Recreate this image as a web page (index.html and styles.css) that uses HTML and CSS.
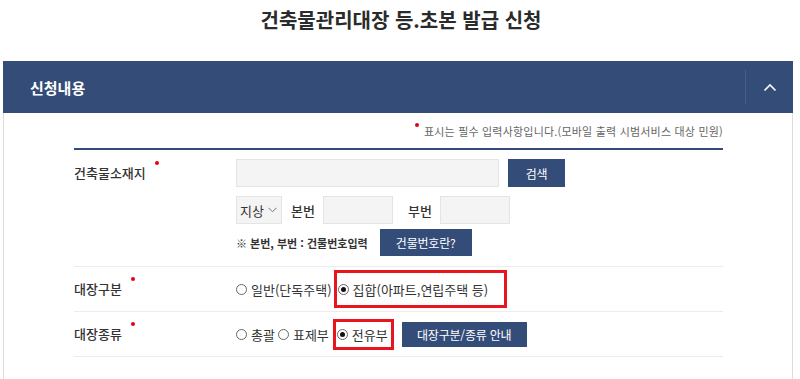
FILE: index.html
```html
<!DOCTYPE html>
<html lang="ko">
<head>
<meta charset="utf-8">
<title>건축물관리대장 등.초본 발급 신청</title>
<link rel="stylesheet" href="styles.css">
</head>
<body>
<h1 class="title">건축물관리대장 등.초본 발급 신청</h1>
<section class="panel">
  <div class="panel-head">
    <h2 class="panel-title">신청내용</h2>
    <button class="toggle" type="button" aria-label="접기">
      <svg width="14" height="9" viewBox="0 0 14 9"><polyline points="1.5,7.5 7,2 12.5,7.5" fill="none" stroke="#fff" stroke-width="1.6"/></svg>
    </button>
  </div>
  <div class="panel-body">
    <p class="note"><span class="req"></span>표시는 필수 입력사항입니다.(모바일 출력 시범서비스 대상 민원)</p>
    <div class="form">
      <div class="row row-addr">
        <div class="label">건축물소재지<span class="req"></span></div>
        <div class="field">
          <div class="line">
            <span class="input input-addr"></span>
            <button class="btn btn-search" type="button">검색</button>
          </div>
          <div class="line">
            <span class="select">지상<svg width="9" height="6" viewBox="0 0 9 6"><polyline points="0.5,0.8 4.5,4.8 8.5,0.8" fill="none" stroke="#777" stroke-width="1"/></svg></span>
            <span class="sub-label sl-1">본번</span>
            <span class="input input-num"></span>
            <span class="sub-label sl-2">부번</span>
            <span class="input input-num"></span>
          </div>
          <div class="line line-hint">
            <span class="hint">※ 본번, 부번 : 건물번호입력</span>
            <button class="btn btn-help" type="button">건물번호란?</button>
          </div>
        </div>
      </div>
      <div class="row row-radio">
        <div class="label">대장구분<span class="req"></span></div>
        <div class="field radios">
          <span class="radio"><span class="dot"></span>일반(단독주택)</span>
          <span class="mark mark-1"><span class="radio"><span class="dot on"></span>집합(아파트,연립주택 등)</span></span>
        </div>
      </div>
      <div class="row row-radio">
        <div class="label">대장종류<span class="req"></span></div>
        <div class="field radios">
          <span class="radio"><span class="dot"></span>총괄</span>
          <span class="radio radio-gap"><span class="dot"></span>표제부</span>
          <span class="mark mark-2"><span class="radio"><span class="dot on"></span>전유부</span></span>
          <button class="btn btn-guide" type="button">대장구분/종류 안내</button>
        </div>
      </div>
    </div>
  </div>
</section>
</body>
</html>
```

FILE: styles.css
```css
* { box-sizing: border-box; }
html, body { margin: 0; padding: 0; background: #fff; }
body {
  font-family: "Noto Sans CJK KR", "Noto Sans", sans-serif;
  color: #333;
  width: 800px;
  overflow: hidden;
}
.title {
  margin: 0;
  height: 40px;
  line-height: 40px;
  text-align: center;
  font-size: 20px;
  font-weight: 700;
  letter-spacing: 0;
  color: #2b2b2b;
  padding-left: 2px;
}
.panel {
  margin: 21px 0 0 3px;
  width: 790px;
}
.panel-head {
  height: 52px;
  background: #344c78;
  display: flex;
  align-items: center;
  justify-content: space-between;
}
.panel-title {
  margin: 0 0 0 27px;
  color: #fff;
  font-size: 15px;
  font-weight: 700;
  letter-spacing: 0;
}
.toggle {
  width: 48px;
  height: 34px;
  border: 0;
  border-left: 1px solid #46608e;
  background: transparent;
  padding: 0;
  display: flex;
  align-items: center;
  justify-content: center;
}
.panel-body {
  border-left: 1px solid #dcdcdc;
  border-right: 1px solid #dcdcdc;
  padding: 9px 69px 30px 70px;
}
.note {
  margin: 0;
  height: 18px;
  line-height: 18px;
  text-align: right;
  font-size: 11px;
  letter-spacing: 0.2px;
  color: #666;
}
.note .req { vertical-align: top; margin: 1px 5px 0 0; }
.req {
  display: inline-block;
  width: 4px;
  height: 4px;
  border-radius: 50%;
  background: #e60012;
}
.form {
  margin-top: 8px;
  border-top: 2px solid #344c78;
}
.row {
  display: flex;
  border-bottom: 1px solid #ececec;
}
.label {
  width: 162px;
  flex: none;
  font-size: 13px;
  font-weight: 500;
  letter-spacing: 0;
  line-height: 28px;
  color: #333;
}
.label .req { vertical-align: top; margin: 2px 0 0 9px; }
.row-addr { padding: 9px 0 10px; }
.field { flex: 1; }
.line { display: flex; align-items: center; }
.line + .line { margin-top: 9px; }
.line-hint { margin-top: 5px !important; }
.input {
  display: block;
  height: 28px;
  background: #f4f4f4;
  border: 1px solid #e4e4e4;
}
.input-addr { width: 263px; }
.input-num { width: 70px; }
.btn {
  border: 0;
  background: #344c78;
  color: #fff;
  font-family: inherit;
  font-size: 12px;
  letter-spacing: -0.2px;
  padding: 0;
  border-radius: 0;
}
.btn-search { width: 57px; height: 28px; margin-left: 9px; }
.select {
  width: 46px;
  height: 28px;
  background: #f4f4f4;
  border: 1px solid #e4e4e4;
  display: flex;
  align-items: center;
  gap: 4px;
  padding-left: 3px;
  font-size: 13px;
  letter-spacing: 0;
  color: #333;
}
.sub-label {
  font-size: 13px;
  letter-spacing: 0;
  font-weight: 500;
}
.sl-1 { margin: 0 8px 0 9px; }
.sl-2 { margin: 0 8px 0 15px; }
.hint {
  font-size: 11px;
  font-weight: 700;
  letter-spacing: 0;
  color: #333;
}
.btn-help { width: 92px; height: 27px; margin-left: 12px; }
.row-radio { height: 45px; align-items: center; }
.row-radio .label { line-height: 28px; }
.radios {
  display: flex;
  align-items: center;
  font-size: 13px;
  letter-spacing: 0;
  color: #333;
}
.radio { display: inline-flex; align-items: center; white-space: nowrap; }
.radio-gap { margin-left: 3px; }
.dot {
  width: 11px;
  height: 11px;
  border: 1px solid #666;
  border-radius: 50%;
  margin-right: 4px;
  display: inline-flex;
  align-items: center;
  justify-content: center;
  flex: none;
}
.dot.on::after {
  content: "";
  width: 5px;
  height: 5px;
  border-radius: 50%;
  background: #111;
}
.mark {
  display: inline-flex;
  align-items: center;
  border: 3px solid #e8141e;
  margin-left: 2px;
}
.mark-1 { height: 38px; padding: 0 16px 0 1px; }
.mark-2 { height: 31px; padding: 0 3px 0 1px; margin-left: 4px; }
.btn-guide { width: 125px; height: 25px; margin-left: 8px; }
```
